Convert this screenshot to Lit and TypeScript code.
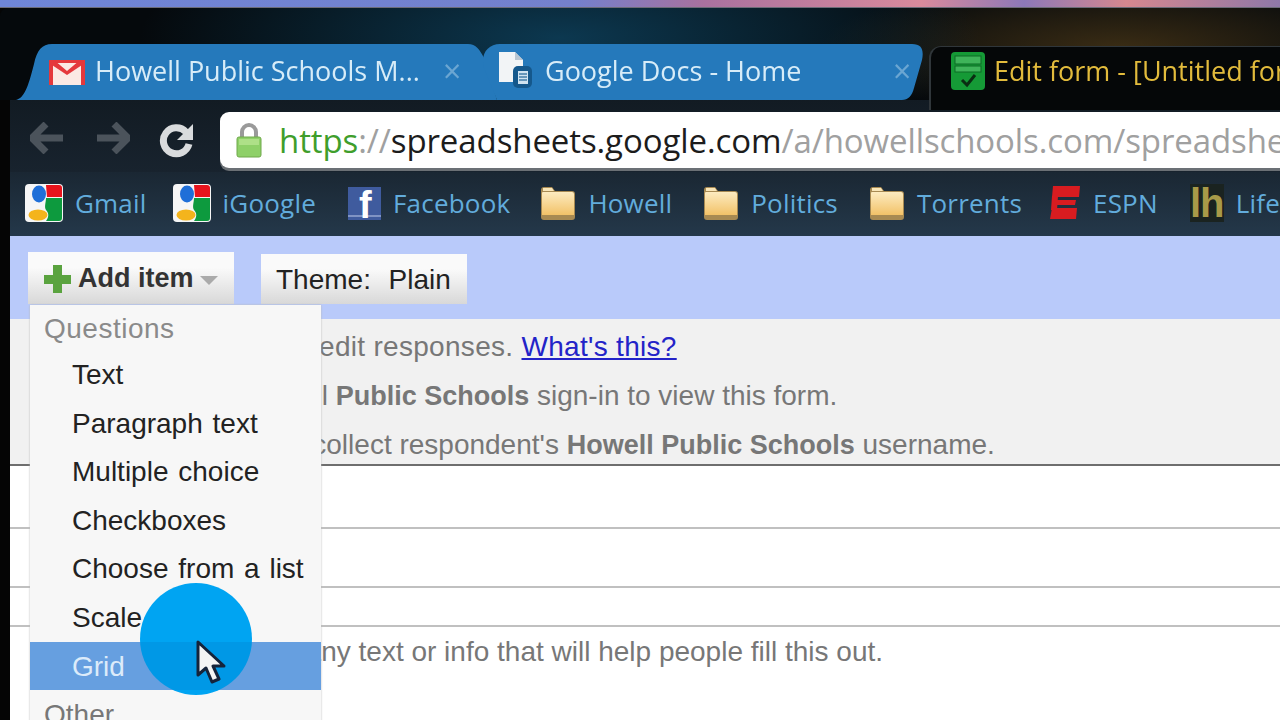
import { LitElement, html, css, svg } from "lit";
import { customElement } from "lit/decorators.js";

const googleIcon = svg`
	<rect x="0" y="0" width="38" height="38" rx="4" fill="#f6f6f6" />
	<path d="M21 1h13a3 3 0 0 1 3 3v9H22z" fill="#e8131c" />
	<path d="M21 14h16v20a3 3 0 0 1-3 3H21c3-4 3-8 0-11-2-3 0-8 0-12z" fill="#0d9a3e" />
	<ellipse cx="14" cy="10" rx="7" ry="8.5" fill="#1f6fd8" />
	<ellipse cx="13" cy="31" rx="9.5" ry="5.5" fill="#f4b41c" />
`;

const folderIcon = svg`
	<defs>
		<linearGradient id="fold" x1="0" y1="0" x2="0" y2="1">
			<stop offset="0" stop-color="#fdebc0" />
			<stop offset="1" stop-color="#f2c268" />
		</linearGradient>
	</defs>
	<path d="M1 5a3 3 0 0 1 3-3h8l3 4h17a3 3 0 0 1 3 3v23a3 3 0 0 1-3 3H4a3 3 0 0 1-3-3z" fill="#a88a52" />
	<path d="M2 8a1 1 0 0 1 1-1h29a2 2 0 0 1 2 2v21H2z" fill="url(#fold)" />
	<path d="M3 3h9l2 3H3z" fill="#f9e6b8" />
`;

const bookmarks = [
	{ icon: "google", label: "Gmail", cls: "gap-a" },
	{ icon: "google", label: "iGoogle", cls: "gap-b" },
	{ icon: "fb", label: "Facebook", cls: "gap-c" },
	{ icon: "folder", label: "Howell", cls: "gap-d" },
	{ icon: "folder", label: "Politics", cls: "gap-d" },
	{ icon: "folder", label: "Torrents", cls: "gap-e" },
	{ icon: "espn", label: "ESPN", cls: "gap-f" },
	{ icon: "lh", label: "Lifehacker", cls: "" },
];

const questionTypes = ["Text", "Paragraph text", "Multiple choice", "Checkboxes", "Choose from a list", "Scale", "Grid"];

@customElement("app-root")
export class AppRoot extends LitElement {
	static styles = css`
		:host {
			display: block;
			width: 1280px;
			height: 720px;
			overflow: hidden;
			background: #050505;
		}

		.screen {
			width: 1280px;
			height: 720px;
			overflow: hidden;
			position: relative;
			filter: blur(0.7px);
			font-family: "Liberation Sans", Arial, sans-serif;
		}

		.desktop {
			height: 8px;
			background: linear-gradient(90deg, #6f86d8 0%, #7480cc 45%, #a9719f 55%, #d98a9c 72%, #8d78b8 80%, #d6878f 88%, #8f78a8 100%);
			border-bottom: 1px solid #6c6c78;
			box-sizing: border-box;
		}

		.strip {
			height: 92px;
			box-sizing: border-box;
			padding: 36px 0 0 16px;
			display: flex;
			background: radial-gradient(ellipse 420px 120px at 560px 30px, #0c3850 0%, rgba(12, 56, 80, 0) 100%),
				radial-gradient(ellipse 300px 70px at 1120px 40px, #3a2c14 0%, rgba(58, 44, 20, 0) 100%), #05090c;
			border-radius: 8px 0 0 0;
		}

		.tab {
			height: 56px;
			flex: none;
			display: flex;
			align-items: center;
			background: #2579bb;
			color: #d7ecf8;
			font-family: "Open Sans", sans-serif;
			font-size: 27px;
			white-space: nowrap;
		}

		.tab-mail {
			width: 481px;
			padding-left: 33px;
			box-sizing: border-box;
			clip-path: path("M0 56 C8 54 12 44 18 20 C21 6 26 0 36 0 H452 C460 0 464 6 468 14 L481 56 Z");
		}

		.tab-docs {
			width: 451px;
			margin-left: -15px;
			padding-left: 16px;
			box-sizing: border-box;
			clip-path: path("M15 56 L2 24 C-2 10 6 0 18 0 H430 C440 0 442 6 440 16 L432 44 C430 52 426 56 420 56 Z");
		}

		.tab-form {
			flex: 1;
			position: relative;
			margin-left: -4px;
			margin-top: 2px;
			padding-left: 20px;
			height: 64px;
			align-items: flex-start;
			background: #050708;
			color: #e2bb3c;
			border-radius: 12px 0 0 0;
			border-top: 1px solid #30363a;
			border-left: 2px solid #30363a;
			box-sizing: border-box;
		}

		.tab-form svg {
			margin-top: 5px;
		}

		.tab-form .title {
			margin-top: 5px;
			padding-bottom: 0;
			width: auto;
		}

		.tab-icon {
			flex: none;
			margin-right: 10px;
		}

		.tab-docs .tab-icon {
			margin-right: 12px;
			margin-bottom: 4px;
		}

		.tab-form .tab-icon {
			margin-right: 9px;
		}

		.title {
			width: 348px;
			flex: none;
			overflow: hidden;
			padding-bottom: 3px;
		}

		.close {
			color: #6ba6d2;
			font-size: 32px;
			padding-bottom: 3px;
		}

		.toolbar {
			height: 72px;
			margin-left: 10px;
			box-sizing: border-box;
			padding: 12px 0 4px 20px;
			display: flex;
			align-items: center;
			background: linear-gradient(180deg, #121b23, #18232e);
		}

		.nav {
			flex: none;
			display: flex;
			gap: 32px;
			width: 190px;
		}

		.nav .reload {
			margin-left: -3px;
		}

		.url {
			flex: 1;
			height: 56px;
			background: #fff;
			border-radius: 9px 0 0 9px;
			box-shadow: 0 3px 0 #6b7075;
			display: flex;
			align-items: center;
			padding-left: 16px;
			font-family: "Open Sans", sans-serif;
			font-size: 33px;
			letter-spacing: -0.1px;
			white-space: nowrap;
			overflow: hidden;
			color: #a0a0a0;
		}

		.url svg {
			flex: none;
			margin-right: 17px;
		}

		.green {
			color: #3f9e2c;
		}

		.domain {
			color: #1c1c1c;
		}

		.bookmarks {
			height: 64px;
			margin-left: 10px;
			box-sizing: border-box;
			padding: 0 0 2px 15px;
			display: flex;
			align-items: center;
			background: linear-gradient(180deg, #1a2733, #24384a);
			font-family: "Open Sans", sans-serif;
			font-size: 26px;
			letter-spacing: 0.2px;
			color: #62acdc;
			white-space: nowrap;
		}

		.mark {
			flex: none;
			display: flex;
			align-items: center;
			gap: 12px;
		}

		.gap-a {
			margin-right: 26px;
		}

		.gap-b {
			margin-right: 32px;
		}

		.gap-c {
			margin-right: 30px;
		}

		.gap-d {
			margin-right: 31px;
		}

		.gap-e {
			margin-right: 27px;
		}

		.gap-f {
			margin-right: 32px;
		}

		.lh {
			width: 34px;
			font-weight: bold;
			font-family: "Liberation Sans", sans-serif;
			font-size: 40px;
			letter-spacing: -1px;
			line-height: 38px;
			color: #a89a48;
			background: #1a2320;
			text-align: center;
		}

		.page {
			margin-left: 10px;
			height: 484px;
			background: #fff;
			font-size: 28px;
			color: #777;
			position: relative;
		}

		.actions {
			height: 83px;
			box-sizing: border-box;
			padding: 16px 0 0 18px;
			display: flex;
			align-items: flex-start;
			gap: 27px;
			background: #b9cafa;
		}

		.button {
			height: 52px;
			box-sizing: border-box;
			padding-top: 1px;
			display: flex;
			align-items: center;
			background: linear-gradient(180deg, #fafafa 30%, #d8d8d8 100%);
			color: #222;
			white-space: nowrap;
		}

		.add {
			width: 206px;
			padding-left: 15px;
			font-size: 27px;
			font-weight: bold;
			color: #333;
		}

		.add svg {
			margin-right: 6px;
		}

		.caret {
			width: 0;
			height: 0;
			margin-left: 6px;
			margin-top: 4px;
			border: 9px solid transparent;
			border-top: 9px solid #aaa;
			border-bottom: 0;
		}

		.theme {
			width: 206px;
			height: 50px;
			margin-top: 2px;
			padding-left: 15px;
			word-spacing: 1px;
			white-space: pre;
		}

		.notice {
			height: 147px;
			box-sizing: border-box;
			background: #f1f1f1;
			border-bottom: 2px solid #6e6e6e;
			padding-top: 3px;
			display: flex;
			flex-direction: column;
		}

		.notice div {
			height: 49px;
			line-height: 49px;
			white-space: nowrap;
		}

		.notice .l1 {
			padding-left: 35px;
			letter-spacing: 0.3px;
		}

		.notice .l2,
		.notice .l3 {
			padding-left: 128px;
		}

		.notice b {
			font-size: 27px;
		}

		.notice a {
			color: #2323c8;
		}

		.row {
			box-sizing: border-box;
			border-bottom: 2px solid #c0c0c0;
		}

		.row-a {
			height: 63px;
		}

		.row-b {
			height: 59px;
		}

		.row-c {
			height: 39px;
		}

		.help {
			line-height: 49px;
			padding-left: 238px;
			white-space: nowrap;
		}

		.menu {
			position: absolute;
			left: 20px;
			top: 69px;
			width: 291px;
			height: 430px;
			background: #f7f7f7;
			box-shadow: 0 0 2px #bbb;
			color: #222;
			display: flex;
			flex-direction: column;
			overflow: hidden;
		}

		.menu-head {
			flex: none;
			height: 45px;
			line-height: 48px;
			padding-left: 14px;
			letter-spacing: 0.5px;
			color: #8a8a8a;
		}

		.menu-item {
			flex: none;
			height: 48.6px;
			line-height: 50.6px;
			padding-left: 42px;
			word-spacing: 2px;
			white-space: nowrap;
		}

		.menu-item.active {
			background: #669fe0;
			color: #dcebfa;
		}

		.menu-other {
			flex: none;
			height: 46px;
			line-height: 50px;
			padding-left: 14px;
			color: #777;
		}

		.spot {
			position: absolute;
			left: 140px;
			top: 583px;
			width: 112px;
			height: 112px;
			border-radius: 50%;
			background: linear-gradient(180deg, #00a4f2 0 59px, #0098e6 59px 107px, #00a4f2 107px);
		}

		.cursor {
			position: absolute;
			left: 195px;
			top: 640px;
		}
	`;

	private bookmarkIcon(kind: string) {
		if (kind === "google") {
			return html`<svg width="38" height="38" viewBox="0 0 38 38">${googleIcon}</svg>`;
		}
		if (kind === "fb") {
			return html`<svg width="33" height="33" viewBox="0 0 33 33">
				<rect width="33" height="33" fill="#3f5b9e" />
				<rect y="28" width="33" height="2" fill="#7f93c4" />
				<text x="11" y="31" font-family="Liberation Sans" font-weight="bold" font-size="38" fill="#fff">f</text>
			</svg>`;
		}
		if (kind === "folder") {
			return html`<svg width="36" height="36" viewBox="0 0 36 36">${folderIcon}</svg>`;
		}
		if (kind === "espn") {
			return html`<svg width="32" height="34" viewBox="0 0 32 34">
				<path d="M4 0H31L30 11H3z M3 14H27L26 19H3z M3 22H28L27 33H1z M3 10H9L8 24H2z" fill="#d81c20" />
			</svg>`;
		}
		return html`<span class="lh">lh</span>`;
	}

	render() {
		return html`
			<div class="screen">
				<div class="desktop"></div>
				<div class="strip">
					<div class="tab tab-mail">
						<svg class="tab-icon" width="36" height="25" viewBox="0 0 36 25">
							<rect width="36" height="25" fill="#e5383c" />
							<path d="M4 3h28v22H4z" fill="#fbe9e4" />
							<path d="M0 0h5l13 11L31 0h5v3L18 15 0 3z" fill="#e5383c" />
						</svg>
						<span class="title">Howell Public Schools M...</span>
						<span class="close">×</span>
					</div>
					<div class="tab tab-docs">
						<svg class="tab-icon" width="35" height="38" viewBox="0 0 35 38">
							<path d="M1 1h16l8 8v22H1z" fill="#f2f4f6" />
							<path d="M17 1v8h8z" fill="#b9c6d2" />
							<rect x="15" y="15" width="19" height="22" rx="5" fill="#15588c" />
							<rect x="20" y="20" width="10" height="13" fill="#cfe2f0" />
							<path d="M21 23h8M21 26h8M21 29h8" stroke="#447da8" stroke-width="1.4" />
						</svg>
						<span class="title">Google Docs - Home</span>
						<span class="close">×</span>
					</div>
					<div class="tab tab-form">
						<svg class="tab-icon" width="34" height="38" viewBox="0 0 34 38">
							<rect width="34" height="38" rx="4" fill="#159a36" />
							<rect x="4" y="4" width="26" height="8" fill="#3fb45a" stroke="#0d6a24" />
							<rect x="4" y="14" width="26" height="6" fill="#3fb45a" stroke="#0d6a24" />
							<path d="M11 28l5 5 8-10" fill="none" stroke="#0a2e12" stroke-width="3" />
						</svg>
						<span class="title">Edit form - [Untitled form] - Google Docs</span>
					</div>
				</div>
				<div class="toolbar">
					<div class="nav">
						<svg width="34" height="32" viewBox="0 0 34 32">
							<path d="M16 2L2 16l14 14M3 16h30" fill="none" stroke="#4b535b" stroke-width="7" stroke-linejoin="round" />
						</svg>
						<svg width="34" height="32" viewBox="0 0 34 32">
							<path d="M18 2l14 14-14 14M31 16H1" fill="none" stroke="#4b535b" stroke-width="7" stroke-linejoin="round" />
						</svg>
						<svg class="reload" width="36" height="36" viewBox="0 0 36 36">
							<path d="M27 10a13 13 0 1 0 3 12" fill="none" stroke="#d9dbdd" stroke-width="7" />
							<path d="M34 2v16H18z" fill="#d9dbdd" />
						</svg>
					</div>
					<div class="url">
						<svg width="26" height="36" viewBox="0 0 26 36">
							<path d="M6 17V10a7 7 0 0 1 14 0v7" fill="none" stroke="#9a9a9a" stroke-width="4" />
							<rect x="1" y="15" width="24" height="20" rx="2" fill="#8ed068" stroke="#6fa84a" />
							<rect x="3" y="17" width="20" height="6" fill="#aee088" />
						</svg>
						<span class="green">https</span><span>://</span><span class="domain">spreadsheets.google.com</span><span>/a/howellschools.com/spreadsheets</span>
					</div>
				</div>
				<div class="bookmarks">
					${bookmarks.map(
						(b) => html`<div class="mark ${b.cls}">${this.bookmarkIcon(b.icon)}<span>${b.label}</span></div>`
					)}
				</div>
				<div class="page">
					<div class="actions">
						<div class="button add">
							<svg width="29" height="30" viewBox="0 0 29 30">
								<path d="M10 1h9v10h9v9h-9v9h-9v-9H1v-9h9z" fill="#5aa33f" />
							</svg>
							Add item
							<span class="caret"></span>
						</div>
						<div class="button theme">Theme:  Plain</div>
					</div>
					<div class="notice">
						<div class="l1">Allow respondents to edit responses. <a href="#">What's this?</a></div>
						<div class="l2">Require Howell <b>Public Schools</b> sign-in to view this form.</div>
						<div class="l3">Automatically collect respondent's <b>Howell Public Schools</b> username.</div>
					</div>
					<div class="row row-a"></div>
					<div class="row row-b"></div>
					<div class="row row-c"></div>
					<div class="help">Add any text or info that will help people fill this out.</div>
					<div class="menu">
						<div class="menu-head">Questions</div>
						${questionTypes.map(
							(q) => html`<div class="menu-item ${q === "Grid" ? "active" : ""}">${q}</div>`
						)}
						<div class="menu-other">Other</div>
					</div>
				</div>
				<div class="spot"></div>
				<svg class="cursor" width="34" height="46" viewBox="0 0 34 46">
					<path d="M3 2v33l8-7 6 14 7-3-6-13h11z" fill="#f4f4f4" stroke="#15233a" stroke-width="3" stroke-linejoin="round" />
				</svg>
			</div>
		`;
	}
}
